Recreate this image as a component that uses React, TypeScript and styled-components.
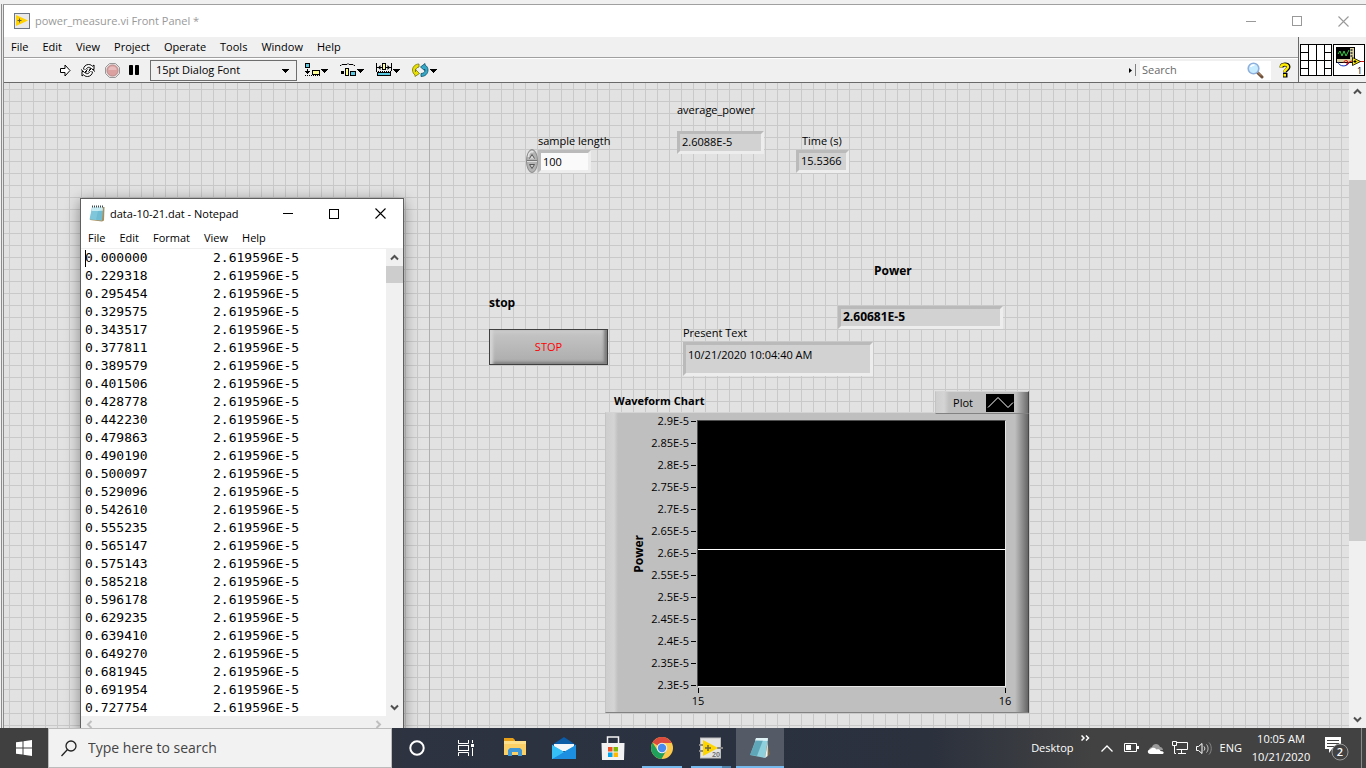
import React from "react";
import styled, { createGlobalStyle, css } from "styled-components";

const Global = createGlobalStyle`
  * { box-sizing: border-box; }
  html, body, #root { height: 100%; margin: 0; }
  body {
    font-family: "Open Sans", "Noto Sans", sans-serif;
    font-size: 11px;
    line-height: 16px;
    color: #000;
    overflow: hidden;
  }
  button, input, select, textarea { font: inherit; color: inherit; margin: 0; padding: 0; border: 0; background: none; border-radius: 0; outline: none; }
  svg { display: block; flex: none; }
  ul { list-style: none; margin: 0; padding: 0; }
`;

/* ---------- desktop ---------- */

const Desktop = styled.div`
  position: relative;
  display: flex;
  flex-direction: column;
  height: 100vh;
  overflow: hidden;
  background: #f0f0f0;
`;

const WindowFrame = styled.section`
  flex: 1;
  min-height: 0;
  display: flex;
  flex-direction: column;
  margin: 4px 0 0 3px;
  border-top: 1px solid #a0a0a0;
  border-left: 1px solid #8c8c8c;
  box-shadow: -1px 0 #e8e8e8, -2px 0 #8c8c8c;
  background: #fff;
`;

const TitleBar = styled.header<{ $inactive?: boolean }>`
  display: flex;
  align-items: center;
  height: ${(p) => (p.$inactive ? 32 : 29)}px;
  flex: none;
  padding-left: ${(p) => (p.$inactive ? 10 : 8)}px;
  color: ${(p) => (p.$inactive ? "#999" : "#000")};
  background: #fff;
`;

const TitleText = styled.h1`
  flex: 1;
  margin: 0 0 0 5px;
  font-size: 11px;
  font-weight: 400;
  white-space: nowrap;
`;

const CaptionButton = styled.button`
  display: grid;
  place-items: center;
  width: 46px;
  height: 100%;
`;

/* ---------- menu and toolbar ---------- */

const Chrome = styled.div`
  display: grid;
  grid-template-columns: 1fr 68px;
  flex: none;
  height: 46px;
  background: #f0f0f0;
  border-bottom: 1px solid #696969;
`;

const Bars = styled.div`
  display: flex;
  flex-direction: column;
  min-width: 0;
`;

const MenuBar = styled.ul<{ $notepad?: boolean }>`
  display: flex;
  align-items: center;
  height: 20px;
  padding-left: 7px;
  gap: 14px;
  background: ${(p) => (p.$notepad ? "#fff" : "#f0f0f0")};
  flex: none;
`;

const MenuItem = styled.button`
  display: block;
  white-space: nowrap;
`;

const ToolBar = styled.div`
  flex: 1;
  display: flex;
  align-items: center;
  border-top: 1px solid #a0a0a0;
  box-shadow: inset 0 1px #fff;
  padding-left: 56px;
`;

const ToolGroup = styled.div<{ $gap: number; $left?: number }>`
  display: flex;
  align-items: center;
  gap: ${(p) => p.$gap}px;
  margin-left: ${(p) => p.$left ?? 0}px;
`;

const ToolButton = styled.button`
  display: grid;
  place-items: center;
`;

const FontPicker = styled.div`
  position: relative;
  width: 147px;
  height: 21px;
  margin-left: 11px;
  select {
    appearance: none;
    width: 100%;
    height: 100%;
    padding-left: 5px;
    border: 1px solid #6e6e6e;
    background: #f0f0f0;
  }
  svg {
    position: absolute;
    right: 8px;
    top: 9px;
    pointer-events: none;
  }
`;

const SearchArea = styled.div`
  display: flex;
  align-items: center;
  margin-left: auto;
  padding-right: 7px;
`;

const SearchBox = styled.label`
  display: flex;
  align-items: center;
  width: 131px;
  height: 19px;
  margin-left: 4px;
  margin-right: 8px;
  padding: 0 7px 0 2px;
  background: #fff;
  input {
    flex: 1;
    min-width: 0;
    &::placeholder { color: #6a6a6a; opacity: 1; }
  }
`;

const IconPane = styled.div`
  display: flex;
  align-items: center;
  gap: 1px;
  padding-left: 1px;
  border-left: 1px solid #696969;
`;

/* ---------- front panel canvas ---------- */

const Workspace = styled.div`
  flex: 1;
  min-height: 0;
  display: flex;
`;

const Canvas = styled.main`
  position: relative;
  flex: 1;
  overflow: hidden;
  background-color: #e2e2e2;
  background-image:
    linear-gradient(90deg, transparent 425px, #b0b0b0 425px, #b0b0b0 426px, transparent 426px),
    linear-gradient(90deg, #c9c9c9 1px, transparent 1px),
    linear-gradient(#c9c9c9 1px, transparent 1px);
  background-size: 100% 100%, 12px 12px, 12px 12px;
  background-position: 0 0, 5px 0, 0 6px;
`;

const Placed = styled.div<{ $x: number; $y: number; $w?: number }>`
  position: absolute;
  left: ${(p) => p.$x}px;
  top: ${(p) => p.$y}px;
  width: ${(p) => (p.$w ? p.$w + "px" : "auto")};
`;

const Caption = styled.label<{ $bold?: boolean; $indent?: boolean }>`
  display: block;
  padding-left: ${(p) => (p.$indent ? 6 : 0)}px;
  font-size: ${(p) => (p.$bold ? 12 : 11)}px;
  font-weight: ${(p) => (p.$bold ? 700 : 400)};
  white-space: nowrap;
`;

const bevel = css`
  border: 3px solid;
  border-color: #bababa #ededed #ededed #bababa;
`;

const Indicator = styled.output<{ $tall?: boolean; $bold?: boolean; $gap?: number }>`
  ${bevel}
  display: block;
  height: ${(p) => (p.$tall ? 34 : 23)}px;
  margin-top: ${(p) => p.$gap ?? 1}px;
  padding-left: 2px;
  padding-top: ${(p) => (p.$tall ? 2 : 0)}px;
  background: #d2d2d2;
  font-size: ${(p) => (p.$bold ? 12 : 11)}px;
  font-weight: ${(p) => (p.$bold ? 700 : 400)};
  white-space: nowrap;
`;

const NumericControl = styled.div`
  display: flex;
  align-items: center;
  margin-left: -12px;
  input {
    ${bevel}
    width: 53px;
    height: 23px;
    padding-left: 2px;
    background: #fafafa;
  }
`;

const Spinner = styled.button`
  display: block;
`;

const StopButton = styled.button`
  display: block;
  width: 119px;
  height: 36px;
  margin-top: 18px;
  color: #f00;
  border: 1px solid #404040;
  background: linear-gradient(#c6c6c6, #acacac);
  box-shadow:
    inset 5px 0 3px -2px #d4d4d4,
    inset -4px 0 3px -1px #7c7c7c,
    inset 0 -4px 3px -2px #808080,
    inset 0 4px 3px -2px #d0d0d0;
`;

/* ---------- waveform chart ---------- */

const ChartHead = styled.div`
  display: flex;
  justify-content: space-between;
  align-items: flex-start;
  padding-left: 9px;
  h2 {
    margin: 2px 0 0;
    font-size: 11px;
    line-height: 16px;
  }
`;

const metal = css`
  border: 1px solid;
  border-color: #d4d4d4 #484848 #828282 #c4c4c4;
`;

const Legend = styled.div`
  ${metal}
  display: flex;
  align-items: center;
  justify-content: flex-end;
  gap: 13px;
  width: 94px;
  height: 23px;
  padding-right: 14px;
  margin-bottom: -2px;
  position: relative;
  background: linear-gradient(90deg, #cecece 0, #d4d4d4 8px, #bfbfbf 13px, #bfbfbf 80px, #6c6c6c 100%);
`;

const ChartBody = styled.div`
  ${metal}
  display: grid;
  grid-template-columns: 36px 50px 309px;
  grid-template-rows: 267px 24px;
  padding: 7px 0 0 5px;
  height: 301px;
  background: linear-gradient(90deg, #cecece 0, #d4d4d4 8px, #bfbfbf 12px, #bfbfbf calc(100% - 13px), #666 100%);
`;

const AxisTitle = styled.div`
  display: grid;
  align-items: center;
  justify-items: end;
  font-weight: 700;
  font-size: 12px;
  span {
    writing-mode: vertical-rl;
    transform: rotate(180deg);
  }
`;

const YAxis = styled.ul`
  display: flex;
  flex-direction: column;
  margin: -10px 0;
  li {
    display: flex;
    flex: none;
    align-items: center;
    justify-content: flex-end;
    gap: 2px;
    height: 22px;
    padding-right: 1px;
    white-space: nowrap;
  }
  li::after {
    content: "";
    width: 5px;
    height: 1px;
    background: #000;
  }
`;

const Plot = styled.svg`
  width: 309px;
  height: 267px;
  border: 1px solid;
  border-color: #505050 #e6e6e6 #e6e6e6 #505050;
  background: #000;
`;

const XAxis = styled.ul`
  grid-column: 3;
  display: flex;
  justify-content: space-between;
  margin: 1px -7px 0;
  li {
    display: flex;
    flex-direction: column;
    align-items: center;
    width: 16px;
    line-height: 16px;
  }
  li::before {
    content: "";
    width: 1px;
    height: 5px;
    background: #000;
  }
`;

/* ---------- scroll bars ---------- */

const ScrollBar = styled.div<{ $horizontal?: boolean }>`
  display: flex;
  flex-direction: ${(p) => (p.$horizontal ? "row" : "column")};
  justify-content: space-between;
  align-items: center;
  flex: none;
  ${(p) => (p.$horizontal ? "height: 17px; padding-right: 17px;" : "width: 17px;")}
  background: #f0f0f0;
`;

const ScrollArrow = styled.button`
  display: grid;
  place-items: center;
  width: 16px;
  height: 17px;
`;

const ScrollTrack = styled.div<{ $top: number }>`
  flex: 1;
  width: 100%;
  padding: ${(p) => p.$top}px 0 0 0;
`;

const ScrollThumb = styled.div<{ $h: number | string }>`
  height: ${(p) => (typeof p.$h === "number" ? p.$h + "px" : p.$h)};
  background: #cdcdcd;
`;

/* ---------- notepad ---------- */

const Notepad = styled.section`
  position: absolute;
  left: 80px;
  top: 198px;
  bottom: 34px;
  width: 324px;
  display: flex;
  flex-direction: column;
  border: 1px solid #5f5f5f;
  background: #fff;
  box-shadow: 0 3px 14px rgba(0, 0, 0, 0.42);
`;

const Editor = styled.div`
  position: relative;
  flex: 1;
  min-height: 0;
  display: flex;
  border-top: 1px solid #f0f0f0;
  textarea {
    flex: 1;
    min-width: 0;
    padding: 0 0 0 4px;
    resize: none;
    overflow: hidden;
    white-space: pre;
    tab-size: 128px;
    font-family: "DejaVu Sans Mono", monospace;
    font-size: 13px;
    line-height: 18px;
  }
`;

const Caret = styled.i`
  position: absolute;
  left: 4px;
  top: 1px;
  width: 1px;
  height: 17px;
  background: #000;
`;

/* ---------- taskbar ---------- */

const TaskBar = styled.footer`
  position: relative;
  display: flex;
  align-items: stretch;
  flex: none;
  height: 40px;
  color: #fff;
  background: linear-gradient(90deg, #404040 0, #2d3340 30%, #2a3140 50%, #2b313d 68%, #424242 80%, #424242 100%);
`;

const StartButton = styled.button`
  display: grid;
  place-items: center;
  width: 48px;
  background: #404040;
`;

const TaskSearch = styled.label`
  display: flex;
  align-items: center;
  gap: 11px;
  width: 344px;
  padding-left: 12px;
  border: 1px solid #bcbcbc;
  background: #f2f2f2;
  color: #444;
  input {
    flex: 1;
    min-width: 0;
    font-size: 14px;
    line-height: 20px;
    &::placeholder { color: #444; opacity: 1; }
  }
`;

const Apps = styled.nav`
  display: flex;
  gap: 1px;
  padding-left: 1px;
`;

const AppButton = styled.button<{ $state?: "open" | "many" | "active" }>`
  display: grid;
  place-items: center;
  width: 48px;
  height: 40px;
  padding-bottom: 1px;
  ${(p) =>
    p.$state &&
    css`
      background:
        linear-gradient(90deg, #76b9ed ${p.$state === "many" ? "31px" : "100%"}, #5184ad 0) no-repeat bottom center /
          ${p.$state === "active" ? "48px" : "40px"} 2px,
        ${p.$state === "active" ? "#555b66" : "transparent"};
    `}
`;

const Tray = styled.div`
  display: flex;
  align-items: center;
  margin-left: auto;
  padding-right: 4px;
`;

const TrayIcons = styled.div`
  display: flex;
  align-items: center;
  gap: 8px;
  margin-left: 9px;
`;

const TrayButton = styled.button`
  display: grid;
  place-items: center;
  min-width: 16px;
  white-space: nowrap;
`;

const Chevrons = styled.button`
  align-self: flex-start;
  margin: 7px 0 0 7px;
`;

const Clock = styled.button`
  width: 64px;
  margin-left: 7px;
  line-height: 18px;
  text-align: center;
  white-space: nowrap;
`;

const ShowDesktop = styled.button`
  width: 1px;
  height: 40px;
  margin-left: 10px;
  background: #8a8a8a;
`;

const Notify = styled.button`
  margin-left: 8px;
`;

/* ---------- icons ---------- */

const Drop = () => <path d="M0 0h7v1H0zM1 1h5v1H1zM2 2h3v1H2zM3 3h1v1H3z" fill="#000" />;

const CaptionGlyphs = ({ size, color }: { size: number; color: string }) => (
  <>
    <CaptionButton aria-label="Minimize">
      <svg width="11" height="11" stroke={color}><path d="M0 5.5h10" /></svg>
    </CaptionButton>
    <CaptionButton aria-label="Maximize">
      <svg width={size} height={size} stroke={color} fill="none"><rect x=".5" y=".5" width={size - 1} height={size - 1} /></svg>
    </CaptionButton>
    <CaptionButton aria-label="Close">
      <svg width="11" height="11" stroke={color} strokeWidth="1.1"><path d="M.5.5l10 10M10.5.5l-10 10" /></svg>
    </CaptionButton>
  </>
);

const ViIcon = () => (
  <svg width="16" height="16" viewBox="0 0 16 16">
    <rect x=".5" y=".5" width="15" height="15" fill="#e9e9e9" stroke="#6d7684" />
    <path d="M2 2l12 5.500L2 13z" fill="#ffd200" />
    <path d="M3.500 7.500h4M5.500 5.500v4" stroke="#5a5a3a" />
  </svg>
);

const NoteIcon = () => (
  <svg width="16" height="17" viewBox="0 0 16 17">
    <path d="M4 2h11.500l-.5 13.500-2 1L1 15z" fill="#a98e5c" />
    <path d="M3 2h11L13 15.500.5 14.500z" fill="#7fc6da" />
    <path d="M3 2h11l-.4 4L2.600 6z" fill="#c6ebf3" />
    <path d="M9 6l4.600-.5L13 15l-6-.3z" fill="#5fb0c8" opacity=".5" />
    <path d="M3 1.500h12" stroke="#3c4a50" strokeWidth="2" strokeDasharray="1 1" />
  </svg>
);

const RunIcon = () => (
  <svg width="11" height="13" viewBox="0 0 11 13"><path d="M.5 4.500h4.500v-3.500l5 5.500-5 5.500V8.500H.5z" fill="#fff" stroke="#000" /></svg>
);

const RepeatIcon = () => (
  <svg width="16" height="13" viewBox="0 0 16 13" fill="#fff" stroke="#000">
    <path d="M3.500 5.500C3.500 2.500 6 .5 8.500.5c2 0 3 .7 3.800 1.800L14 1v4.500H9.500L10.700 4C9.500 2.800 7 3 6 5.500z" />
    <path d="M12.500 7.500c0 3-2.500 5-5 5-2 0-3-.7-3.800-1.800L2 12V7.500h4.500L5.300 9c1.200 1.200 3.700 1 4.700-1.500z" />
    <path d="M1 5.500l3.500 3 3-3M8.500 7.500l3-3 3.500 3" />
  </svg>
);

const AbortIcon = () => (
  <svg width="15" height="15" viewBox="0 0 15 15">
    <path d="M4.500.5h6l4 4v6l-4 4h-6l-4-4v-6z" fill="#e6e0e0" stroke="#989898" />
    <circle cx="7.500" cy="7.500" r="5.500" fill="#dba1a1" stroke="#b98a8a" />
    <path d="M3.500 7a4 3.500 0 0 1 8 0z" fill="#e8bcbc" />
  </svg>
);

const PauseIcon = () => (
  <svg width="10" height="11"><path d="M.5.5h3v9h-3zM6.500.5h3v9h-3z" fill="#000" stroke="#000" /></svg>
);

const AlignIcon = () => (
  <svg width="23" height="14" viewBox="0 0 23 14">
    <rect x=".5" y=".5" width="4" height="4" fill="#5ac8e0" stroke="#000" />
    <rect x="7.500" y="7.500" width="7" height="4" fill="#ffff90" stroke="#000" />
    <path d="M2.500 6v5" stroke="#000" />
    <path d="M0 8h5v1H4v1H3v1H2v-1H1V9H0z" fill="#000" />
    <path d="M0 12.500h16" stroke="#000" strokeDasharray="1 1" />
    <g transform="translate(16 6)"><Drop /></g>
  </svg>
);

const DistributeIcon = () => (
  <svg width="24" height="14" viewBox="0 0 24 14">
    <path d="M0 2.500h1l1-1h5l1-1 1 1h4l1 1h1" fill="none" stroke="#000" />
    <path d="M1 8h3v3H1z" fill="#000" />
    <rect x="5.500" y="5.500" width="3" height="7" fill="#ffff90" stroke="#000" />
    <rect x="10.500" y="8.500" width="5" height="4" fill="#5ac8e0" stroke="#000" />
    <g transform="translate(17 6)"><Drop /></g>
  </svg>
);

const ResizeIcon = () => (
  <svg width="24" height="14" viewBox="0 0 24 14">
    <path d="M.5 0v8M15.500 0v8M1 4.500h5M10 4.500h5" stroke="#000" />
    <path d="M2 4.500L4.500 2v5zM14 4.500L11.500 2v5z" fill="#000" />
    <rect x="6.500" y=".5" width="3" height="6" fill="#ffff90" stroke="#000" />
    <path d="M0 8.500h16" stroke="#000" strokeDasharray="1 1" />
    <rect x="1.500" y="9.500" width="13" height="3" fill="#5ac8e0" stroke="#000" />
    <g transform="translate(17 6)"><Drop /></g>
  </svg>
);

const ReorderIcon = () => (
  <svg width="26" height="14" viewBox="0 0 26 14">
    <path d="M7 1C3 1 .5 4 .5 7c0 2 1 4 2.500 5v1.500l4.500-3-4-4V9C3 7 4 4.500 7 4z" fill="#e8e000" stroke="#77730a" strokeWidth=".8" />
    <path d="M9 13.500c4 0 7-2.500 7-6.500 0-2-1-4-3-5V.500L8.500 4l4 3.500V6C14 8 12 10.500 9 10.500z" fill="#35a8c8" stroke="#0b5068" strokeWidth=".8" />
    <g transform="translate(18 6)"><Drop /></g>
  </svg>
);

const Magnifier = () => (
  <svg width="17" height="17" viewBox="0 0 17 17">
    <path d="M10.500 10.500l4.500 4.500" stroke="#6f5038" strokeWidth="3" strokeLinecap="round" />
    <path d="M10 9.500l4 4" stroke="#c99a70" strokeWidth="1" />
    <circle cx="6.500" cy="6.500" r="5.300" fill="#c8ecff" stroke="#8fb0dc" strokeWidth="1.600" />
    <path d="M3.500 5a4 4 0 0 1 4-2" stroke="#fff" strokeWidth="1.500" fill="none" />
  </svg>
);

const HelpIcon = () => (
  <svg width="12" height="16" viewBox="0 0 12 16">
    <path d="M2.500 5.500C2.500 1.500 9.500 1.500 9.500 5c0 2.500-3.500 2.500-3.500 5.500" fill="none" stroke="#000" strokeWidth="4" />
    <path d="M4 11h4.500v4.500H4z" />
    <path d="M2 5.500C2 1.500 9 1.500 9 5c0 2-3.500 2.500-3.500 5" fill="none" stroke="#ffee00" strokeWidth="2.400" />
    <path d="M4.500 12h2.500v2.500H4.500z" fill="#ffee00" />
  </svg>
);

const ConnectorPane = () => (
  <svg width="32" height="32" viewBox="0 0 32 32" stroke="#000">
    <rect x=".5" y=".5" width="31" height="31" fill="#fff" />
    <path d="M8.500 0v32M16.500 0v32M24.500 0v32M8 16.500h16M0 8.500h8M0 16.500h8M0 24.500h8M24 8.500h8M24 16.500h8M24 24.500h8" />
  </svg>
);

const ViPaneIcon = () => (
  <svg width="32" height="32" viewBox="0 0 32 32">
    <rect x=".5" y=".5" width="31" height="31" fill="#fff" stroke="#000" />
    <rect x="3.500" y="3.500" width="18" height="15" fill="#d8d0a0" stroke="#000" />
    <rect x="4" y="4" width="13" height="11" fill="#000" />
    <path d="M5 10l2-3 2 5 2-5 2 5 3-6" fill="none" stroke="#30d040" />
    <path d="M18.500 5v9" stroke="#555" strokeDasharray="2 1" strokeWidth="2" />
    <path d="M5 18c1 5 9 5 11 1" fill="none" stroke="#1030c0" />
    <path d="M11 19a2 2 0 1 1 2 1.500c2-1 3-3 6-3.500M26 17.500h5" fill="none" stroke="#e01010" />
    <path d="M19.500 13.500l8 4-8 4z" fill="#ffe800" stroke="#000" strokeWidth=".8" />
    <path d="M20.500 17.500h3M22 16v3" stroke="#000" />
    <text x="24" y="30" fontSize="9">1</text>
  </svg>
);

const SpinnerIcon = () => (
  <svg width="12" height="24" viewBox="0 0 12 24">
    <ellipse cx="6" cy="12" rx="5.500" ry="11.500" fill="#b4b4b4" stroke="#8a8a8a" />
    <path d="M2.500 8c0-5 3-6 5-5" stroke="#e6e6e6" strokeWidth="1.500" fill="none" />
    <path d="M1 11.500h10" stroke="#777" />
    <path d="M1 12.500h10" stroke="#ddd" />
    <path d="M3.500 9.500L6 5.500l2.500 4" fill="#ddd" stroke="#555" />
    <path d="M3.500 15.500h5L6 19.500z" fill="#d0d0d0" stroke="#555" />
  </svg>
);

const Arrow = ({ d, color = "#505050" }: { d: string; color?: string }) => (
  <svg width="9" height="9" viewBox="0 0 9 9" fill="none" stroke={color} strokeWidth="2"><path d={d} /></svg>
);
const UP = "M1 6.500L4.500 3 8 6.500";
const DOWN = "M1 2.500L4.500 6 8 2.500";
const LEFT = "M6.500 1L3 4.500 6.500 8";
const RIGHT = "M2.500 1L6 4.500 2.500 8";

/* ---------- data ---------- */

const TIMES = [
  "0.000000", "0.229318", "0.295454", "0.329575", "0.343517", "0.377811", "0.389579", "0.401506", "0.428778",
  "0.442230", "0.479863", "0.490190", "0.500097", "0.529096", "0.542610", "0.555235", "0.565147", "0.575143",
  "0.585218", "0.596178", "0.629235", "0.639410", "0.649270", "0.681945", "0.691954", "0.727754",
];
const FILE_TEXT = TIMES.map((t) => `${t}\t2.619596E-5`).join("\n");

const Y_TICKS = [
  "2.9E-5", "2.85E-5", "2.8E-5", "2.75E-5", "2.7E-5", "2.65E-5", "2.6E-5",
  "2.55E-5", "2.5E-5", "2.45E-5", "2.4E-5", "2.35E-5", "2.3E-5",
];

const PANEL_MENU = ["File", "Edit", "View", "Project", "Operate", "Tools", "Window", "Help"];
const NOTE_MENU = ["File", "Edit", "Format", "View", "Help"];

/* ---------- sections ---------- */

const Menu = ({ items, notepad }: { items: string[]; notepad?: boolean }) => (
  <MenuBar $notepad={notepad}>
    {items.map((m) => (
      <li key={m}><MenuItem>{m}</MenuItem></li>
    ))}
  </MenuBar>
);

const WaveformChart = () => (
  <Placed $x={601} $y={308} $w={424}>
    <ChartHead>
      <h2>Waveform Chart</h2>
      <Legend>
        <span>Plot</span>
        <svg width="28" height="18" viewBox="0 0 28 18">
          <rect width="28" height="18" fill="#000" />
          <path d="M2 13.500L12 3.500l10 10 5-5" fill="none" stroke="#fff" />
        </svg>
      </Legend>
    </ChartHead>
    <ChartBody>
      <AxisTitle><span>Power</span></AxisTitle>
      <YAxis>
        {Y_TICKS.map((t) => <li key={t}>{t}</li>)}
      </YAxis>
      <Plot viewBox="0 0 307 265"><path d="M0 128.500h307" stroke="#fff" /></Plot>
      <XAxis><li>15</li><li>16</li></XAxis>
    </ChartBody>
  </Placed>
);

const FrontPanel = () => (
  <Canvas>
    <Placed $x={673} $y={19} $w={87}>
      <Caption htmlFor="avg">average_power</Caption>
      <Indicator id="avg" $gap={13}>2.6088E-5</Indicator>
    </Placed>
    <Placed $x={534} $y={50}>
      <Caption htmlFor="len">sample length</Caption>
      <NumericControl>
        <Spinner aria-label="Step sample length"><SpinnerIcon /></Spinner>
        <input id="len" defaultValue="100" />
      </NumericControl>
    </Placed>
    <Placed $x={792} $y={50} $w={53}>
      <Caption htmlFor="time" $indent>Time (s)</Caption>
      <Indicator id="time">15.5366</Indicator>
    </Placed>
    <Placed $x={870} $y={180}><Caption htmlFor="power" $bold>Power</Caption></Placed>
    <Placed $x={834} $y={222} $w={165}><Indicator id="power" $bold>2.60681E-5</Indicator></Placed>
    <Placed $x={485} $y={212}>
      <Caption htmlFor="stop" $bold>stop</Caption>
      <StopButton id="stop">STOP</StopButton>
    </Placed>
    <Placed $x={679} $y={242} $w={190}>
      <Caption htmlFor="text">Present Text</Caption>
      <Indicator id="text" $tall>10/21/2020 10:04:40 AM</Indicator>
    </Placed>
    <WaveformChart />
  </Canvas>
);

const PanelWindow = () => (
  <WindowFrame>
    <TitleBar $inactive>
      <ViIcon />
      <TitleText>power_measure.vi Front Panel *</TitleText>
      <CaptionGlyphs size={10} color="#999" />
    </TitleBar>
    <Chrome>
      <Bars>
        <Menu items={PANEL_MENU} />
        <ToolBar>
          <ToolGroup $gap={9}>
            <ToolButton aria-label="Run"><RunIcon /></ToolButton>
            <ToolButton aria-label="Run continuously"><RepeatIcon /></ToolButton>
            <ToolButton aria-label="Abort"><AbortIcon /></ToolButton>
            <ToolButton aria-label="Pause"><PauseIcon /></ToolButton>
          </ToolGroup>
          <FontPicker>
            <select aria-label="Text settings"><option>15pt Dialog Font</option></select>
            <svg width="7" height="4"><Drop /></svg>
          </FontPicker>
          <ToolGroup $gap={12} $left={8}>
            <ToolButton aria-label="Align objects"><AlignIcon /></ToolButton>
            <ToolButton aria-label="Distribute objects"><DistributeIcon /></ToolButton>
            <ToolButton aria-label="Resize objects"><ResizeIcon /></ToolButton>
            <ToolButton aria-label="Reorder"><ReorderIcon /></ToolButton>
          </ToolGroup>
          <SearchArea>
            <svg width="7" height="12"><path d="M0 4v5l3-2.500z" fill="#000" /><path d="M6.500 0v12" stroke="#808080" /></svg>
            <SearchBox>
              <input type="text" placeholder="Search" aria-label="Search" />
              <Magnifier />
            </SearchBox>
            <ToolButton aria-label="Context help"><HelpIcon /></ToolButton>
          </SearchArea>
        </ToolBar>
      </Bars>
      <IconPane><ConnectorPane /><ViPaneIcon /></IconPane>
    </Chrome>
    <Workspace>
      <FrontPanel />
      <ScrollBar>
        <ScrollArrow aria-label="Scroll up"><Arrow d={UP} /></ScrollArrow>
        <ScrollTrack $top={80}><ScrollThumb $h="68%" /></ScrollTrack>
        <ScrollArrow aria-label="Scroll down"><Arrow d={DOWN} /></ScrollArrow>
      </ScrollBar>
    </Workspace>
  </WindowFrame>
);

const NotepadWindow = () => (
  <Notepad>
    <TitleBar>
      <NoteIcon />
      <TitleText>data-10-21.dat - Notepad</TitleText>
      <CaptionGlyphs size={10} color="#000" />
    </TitleBar>
    <Menu items={NOTE_MENU} notepad />
    <Editor>
      <textarea aria-label="data-10-21.dat" spellCheck={false} defaultValue={FILE_TEXT} />
      <Caret />
      <ScrollBar>
        <ScrollArrow aria-label="Scroll up"><Arrow d={UP} /></ScrollArrow>
        <ScrollTrack $top={0}><ScrollThumb $h={17} /></ScrollTrack>
        <ScrollArrow aria-label="Scroll down"><Arrow d={DOWN} /></ScrollArrow>
      </ScrollBar>
    </Editor>
    <ScrollBar $horizontal>
      <ScrollArrow aria-label="Scroll left"><Arrow d={LEFT} color="#bfbfbf" /></ScrollArrow>
      <ScrollArrow aria-label="Scroll right"><Arrow d={RIGHT} color="#bfbfbf" /></ScrollArrow>
    </ScrollBar>
  </Notepad>
);

const Taskbar = () => (
  <TaskBar>
    <StartButton aria-label="Start">
      <svg width="16" height="16" viewBox="0 0 16 16" fill="#fff"><path d="M0 2.300l6.500-.9v6.100H0zM7.500 1.200L16 0v7.500H7.500zM0 8.500h6.500v6.100L0 13.700zM7.500 8.500H16V16l-8.500-1.200z" /></svg>
    </StartButton>
    <TaskSearch>
      <svg width="16" height="17" viewBox="0 0 16 17" fill="none" stroke="#222" strokeWidth="1.300"><circle cx="10" cy="6" r="5" /><path d="M6.500 9.500L.5 16" /></svg>
      <input type="text" placeholder="Type here to search" aria-label="Type here to search" />
    </TaskSearch>
    <Apps>
      <AppButton aria-label="Cortana">
        <svg width="16" height="16"><circle cx="8" cy="8" r="6.700" fill="none" stroke="#fff" strokeWidth="2" /></svg>
      </AppButton>
      <AppButton aria-label="Task view">
        <svg width="18" height="16" viewBox="0 0 18 16" fill="none" stroke="#fff">
          <path d="M1.500 0v3.500h10V0M1.500 16v-3.500h10V16" /><rect x="1.500" y="5.500" width="10" height="5" />
          <path d="M15.500 0v3M15.500 8v8" /><path d="M14 4h3v3h-3z" fill="#fff" stroke="none" />
        </svg>
      </AppButton>
      <AppButton aria-label="File Explorer">
        <svg width="22" height="19" viewBox="0 0 22 19">
          <path d="M0 0h9l2 2v3H0z" fill="#e8a018" />
          <path d="M0 3h22v14H0z" fill="#fbd067" />
          <path d="M0 3h22v3H0z" fill="#fde08c" />
          <path d="M4 18v-6l2-2h10l2 2v6h-4v-4H8v4z" fill="#3f97d8" />
        </svg>
      </AppButton>
      <AppButton aria-label="Mail">
        <svg width="24" height="22" viewBox="0 0 24 22">
          <path d="M0 8L12 0l12 8-2 6H2z" fill="#0a5ba8" />
          <path d="M2 7h20v7H2z" fill="#f2f6fa" />
          <path d="M0 8l12 7L24 8v14H0z" fill="#30b4f0" />
          <path d="M24 8v14H0z" fill="#1d8fe0" />
          <path d="M0 8l12 7L0 22z" fill="#36c0f8" />
        </svg>
      </AppButton>
      <AppButton aria-label="Microsoft Store">
        <svg width="24" height="24" viewBox="0 0 24 24">
          <path d="M6.500 8V1h11v7" fill="none" stroke="#f4f4f4" strokeWidth="1.500" />
          <path d="M.5 7h23l-.5 17H1z" fill="#f2f2f2" />
          <path d="M7 11h4.500v4.500H7z" fill="#f25022" /><path d="M12.500 11H17v4.500h-4.500z" fill="#7fba00" />
          <path d="M7 16.500h4.500V21H7z" fill="#00a4ef" /><path d="M12.500 16.500H17V21h-4.500z" fill="#ffb900" />
        </svg>
      </AppButton>
      <AppButton aria-label="Chrome" $state="open">
        <svg width="22" height="22" viewBox="0 0 22 22">
          <circle cx="11" cy="11" r="11" fill="#fdc94b" />
          <path d="M11 11L1.500 5.500A11 11 0 0 1 20.500 5.500L21 6H11z" fill="#dc4b3e" />
          <path d="M1.500 5.500A11 11 0 0 0 10.500 22L15.300 13.500 11 11 6.700 13.500z" fill="#1fa05b" />
          <circle cx="11" cy="11" r="5.200" fill="#f2f2f2" /><circle cx="11" cy="11" r="4.200" fill="#4a8bf0" />
        </svg>
      </AppButton>
      <AppButton aria-label="LabVIEW" $state="many">
        <svg width="24" height="22" viewBox="0 0 24 22">
          <rect x="1.500" y="1" width="20" height="20" fill="#e4e4e4" stroke="#bdbdbd" />
          <path d="M0 8h4M0 14h4M18 11h6" stroke="#888" strokeWidth="2" />
          <path d="M4 3l15 8-15 8z" fill="#ffd500" />
          <path d="M6 11h6M9 8v6" stroke="#6a6440" strokeWidth="1.500" />
          <text x="13" y="20" fontSize="7" fontWeight="700" fill="#777">20</text>
        </svg>
      </AppButton>
      <AppButton aria-label="Notepad" $state="active">
        <svg width="24" height="22" viewBox="0 0 24 22">
          <path d="M18 2l4 15-3 3-3-1z" fill="#7c6a4a" />
          <path d="M8 2h12l-3 19-15-3z" fill="#8fd0dd" />
          <path d="M8 3h7L9 19l-7-1z" fill="#3f8ca0" opacity=".6" />
          <path d="M8 1h12l-.5 3L7 3.500z" fill="#dff2f5" />
          <path d="M17 21l3-17-.5 15z" fill="#eef6f6" />
        </svg>
      </AppButton>
    </Apps>
    <Tray>
      <TrayButton>Desktop</TrayButton>
      <Chevrons aria-label="More toolbars">
        <svg width="9" height="6" viewBox="0 0 9 6" fill="none" stroke="#fff" strokeWidth="1.500"><path d="M.5.5L3 3 .5 5.500M5 .5L7.500 3 5 5.500" /></svg>
      </Chevrons>
      <TrayIcons>
        <TrayButton aria-label="Show hidden icons">
          <svg width="12" height="7" viewBox="0 0 12 7" fill="none" stroke="#fff" strokeWidth="1.300"><path d="M.5 6.500L6 1l5.500 5.500" /></svg>
        </TrayButton>
        <TrayButton aria-label="Battery">
          <svg width="16" height="10" viewBox="0 0 16 10"><path d="M1.500.5h12v8h-12z" fill="none" stroke="#fff" /><path d="M14 3h2v3h-2zM3 2h5v5H3z" fill="#fff" /></svg>
        </TrayButton>
        <TrayButton aria-label="OneDrive">
          <svg width="17" height="11" viewBox="0 0 17 11"><path d="M3 8C1 7 3 4 5 4c1-4 7-4 8 0 2 0 3 2 3 3z" fill="#9a9a9a" /><path d="M3.500 11C0 11 0 7 3 6.500 5 4 8 4.500 9.500 6.500c2-.5 3.500 0 4 1.500 4 0 4 3 1.500 3z" fill="#fff" /></svg>
        </TrayButton>
        <TrayButton aria-label="Network">
          <svg width="16" height="14" viewBox="0 0 16 14" fill="none" stroke="#fff"><path d="M5 1.500h10.500v7H4.500M9.500 9v4M6 12.500h8M.5.500h4v4h-4zM2.500 5v7.500H4" /></svg>
        </TrayButton>
        <TrayButton aria-label="Volume">
          <svg width="16" height="13" viewBox="0 0 16 13" fill="none" stroke="#fff"><path d="M.5 4.500h2l3.500-3v10l-3.500-3h-2zM8 4.500c1 1 1 3 0 4" /><path d="M10.500 2.500c2 2 2 6 0 8" stroke="#ccc" /><path d="M13 .5c3 3 3 9 0 12" stroke="#888" /></svg>
        </TrayButton>
        <TrayButton>ENG</TrayButton>
      </TrayIcons>
      <Clock>10:05 AM<br />10/21/2020</Clock>
      <Notify aria-label="2 new notifications">
        <svg width="30" height="26" viewBox="0 0 30 26">
          <path d="M4 2h16v12h-9l-3 4v-4H4z" fill="#fff" />
          <path d="M6 5.500h12M6 8.500h12M6 11.500h8" stroke="#424242" />
          <circle cx="19" cy="17" r="8" fill="#424242" stroke="#9a9a9a" />
          <text x="19" y="21" fontSize="11" fontWeight="600" textAnchor="middle" fill="#fff">2</text>
        </svg>
      </Notify>
      <ShowDesktop aria-label="Show desktop" />
    </Tray>
  </TaskBar>
);

export default function App() {
  return (
    <Desktop>
      <Global />
      <PanelWindow />
      <NotepadWindow />
      <Taskbar />
    </Desktop>
  );
}
